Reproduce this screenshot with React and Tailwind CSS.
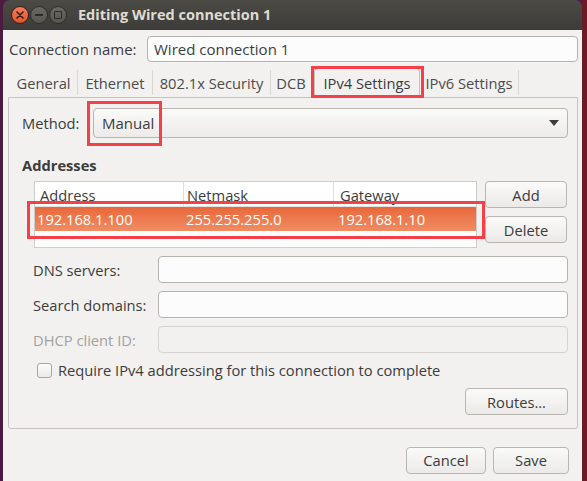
import React from 'react'

const font = { fontFamily: '"Open Sans", "Noto Sans", sans-serif' }

function Field({ label, disabled }) {
  return (
    <div className="flex h-[27px] items-center">
      <span className={`w-[125px] shrink-0 ${disabled ? 'text-[#a3a19d]' : 'text-[#3c3c3c]'}`}>{label}</span>
      <div
        className={`h-[27px] flex-1 rounded-[4px] border ${
          disabled ? 'border-[#d6d4d0] bg-[#f2f1f0]' : 'border-[#b6b3ae] bg-[#fcfcfc]'
        }`}
      />
    </div>
  )
}

function Button({ children, className = '' }) {
  return (
    <div
      className={`flex h-[27px] items-center justify-center rounded-[4px] border border-[#b9b6b0] bg-gradient-to-b from-[#fafaf9] to-[#ebeae8] text-[#3c3c3c] ${className}`}
    >
      {children}
    </div>
  )
}

function Sep() {
  return <div className="mb-[2px] h-[25px] w-px shrink-0 bg-[#d9d7d3]" />
}

export default function App() {
  return (
    <div className="relative flex h-[481px] w-[587px] bg-[#4e1c45] text-[14.7px] text-[#3c3c3c]" style={font}>
      <div className="w-[3px] shrink-0 bg-[#4a1a41]" />
      <div className="flex w-[579px] flex-col">
        {/* title bar */}
        <div className="flex h-[30px] shrink-0 items-center rounded-t-[7px] bg-gradient-to-b from-[#4b4a45] to-[#3d3c38] pl-[8px]">
          <div className="flex h-[18px] w-[18px] items-center justify-center rounded-full border border-[#3a2018] bg-gradient-to-b from-[#f37f5a] to-[#e0522b]">
            <svg width="8" height="8" viewBox="0 0 8 8">
              <path d="M1 1l6 6M7 1l-6 6" stroke="#3a1a10" strokeWidth="1.6" strokeLinecap="round" />
            </svg>
          </div>
          <div className="ml-[1px] flex h-[18px] w-[18px] items-center justify-center rounded-full border border-[#2e2d2a] bg-gradient-to-b from-[#6a6964] to-[#57564f]">
            <div className="h-[2px] w-[8px] bg-[#2c2b28]" />
          </div>
          <div className="ml-[1px] flex h-[18px] w-[18px] items-center justify-center rounded-full border border-[#2e2d2a] bg-gradient-to-b from-[#6a6964] to-[#57564f]">
            <div className="h-[8px] w-[8px] rounded-[1px] border-[1.5px] border-[#2c2b28]" />
          </div>
          <span className="ml-[11px] text-[14.5px] font-bold text-[#dfdbd2]">Editing Wired connection 1</span>
        </div>

        {/* body */}
        <div className="flex flex-1 flex-col bg-[#f2f1f0] pl-[5px] pr-[4px]">
          <div className="mt-[6px] flex h-[26px] items-center">
            <span className="w-[139px] shrink-0 pl-[1px] text-[15px]">Connection name:</span>
            <div className="flex h-[26px] flex-1 items-center rounded-[4px] border border-[#b6b3ae] bg-[#fcfcfc] pl-[6px] text-[15px]">
              Wired connection 1
            </div>
          </div>

          {/* tabs */}
          <div className="mt-[6px] flex h-[29px] items-end text-[#4c4c4c]">
            <div className="flex h-[27px] w-[69px] items-center justify-center pl-[2px]">General</div>
            <Sep />
            <div className="flex h-[27px] w-[74px] items-center justify-center">Ethernet</div>
            <Sep />
            <div className="flex h-[27px] w-[117px] items-center justify-center">802.1x Security</div>
            <Sep />
            <div className="flex h-[27px] w-[40px] items-center justify-center">DCB</div>
            <div className="ml-[3px] flex h-[29px] w-[106px] items-center justify-center rounded-t-[4px] border border-b-0 border-[#c6c3be] bg-[#f2f1f0] text-[#3c3c3c]">
              IPv4 Settings
            </div>
            <div className="flex h-[27px] w-[98px] items-center justify-center">IPv6 Settings</div>
            <Sep />
          </div>

          {/* panel */}
          <div className="flex h-[332px] flex-col rounded-b-[3px] border border-[#c6c3be] pl-[13px] pr-[9px]">
            <div className="mt-[10px] flex h-[30px] items-center">
              <span className="w-[71px] shrink-0">Method:</span>
              <div className="flex h-[30px] flex-1 items-center justify-between rounded-[4px] border border-[#b9b6b0] bg-gradient-to-b from-[#fafaf9] to-[#ecebe9] pl-[8px] pr-[8px] text-[15px]">
                <span>Manual</span>
                <svg width="10" height="6" viewBox="0 0 10 6">
                  <path d="M0 0h10L5 6z" fill="#3c3c3c" />
                </svg>
              </div>
            </div>

            <div className="mt-[16px] font-bold">Addresses</div>

            <div className="mt-[5px] flex">
              <div className="ml-[12px] h-[67px] w-[443px] border border-[#cfcdc9] bg-white">
                <div className="flex h-[25px] items-end border-b border-[#e3e1de] text-[#3c3c3c]">
                  <div className="h-full w-[149px] border-r border-[#e0dedb] pl-[5px] pt-[2px]">Address</div>
                  <div className="h-full w-[150px] border-r border-[#e0dedb] pl-[3px] pt-[2px]">Netmask</div>
                  <div className="h-full flex-1 pl-[6px] pt-[2px]">Gateway</div>
                </div>
                <div className="flex h-[24px] items-center bg-gradient-to-b from-[#e8683a] to-[#f08c62] text-white">
                  <div className="w-[149px] pl-[2px]">192.168.1.100</div>
                  <div className="w-[150px] pl-[2px]">255.255.255.0</div>
                  <div className="flex-1 pl-[4px]">192.168.1.10</div>
                </div>
              </div>
              <div className="ml-[8px] flex flex-col gap-[8px]">
                <Button className="h-[26px] w-[82px]">Add</Button>
                <Button className="w-[82px]">Delete</Button>
              </div>
            </div>

            <div className="ml-[11px] mt-[8px] flex flex-col gap-[8px]">
              <Field label="DNS servers:" />
              <Field label="Search domains:" />
              <Field label="DHCP client ID:" disabled />
            </div>

            <div className="ml-[15px] mt-[6px] flex items-center">
              <div className="h-[15px] w-[15px] rounded-[3px] border border-[#a9a6a1] bg-gradient-to-b from-[#fbfbfa] to-[#ecebe9]" />
              <span className="ml-[6px]">Require IPv4 addressing for this connection to complete</span>
            </div>

            <div className="mt-[7px] flex justify-end">
              <Button className="w-[103px]">Routes...</Button>
            </div>
          </div>

          <div className="mt-[18px] flex justify-end gap-[7px] pr-[9px]">
            <Button className="w-[80px]">Cancel</Button>
            <Button className="w-[76px]">Save</Button>
          </div>
        </div>
      </div>
      <div className="w-[5px] shrink-0 bg-[#6a1b27]" />

      {/* annotation boxes */}
      <div className="pointer-events-none absolute left-[311px] top-[66px] h-[32px] w-[113px] border-[3px] border-[#f5404a]" />
      <div className="pointer-events-none absolute left-[87px] top-[101px] h-[45px] w-[75px] border-[3px] border-[#f5404a]" />
      <div className="pointer-events-none absolute left-[27px] top-[201px] h-[38px] w-[458px] border-[3px] border-[#f5404a]" />
    </div>
  )
}
